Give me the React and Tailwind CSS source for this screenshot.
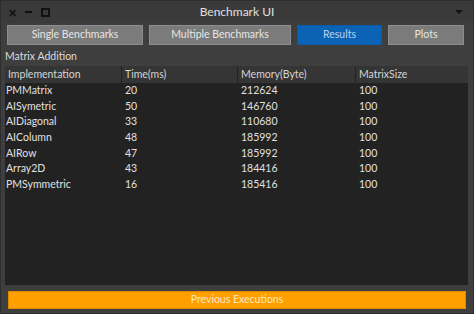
import React from "react";

const rows = [
  ["PMMatrix", "20", "212624", "100"],
  ["AISymetric", "50", "146760", "100"],
  ["AIDiagonal", "33", "110680", "100"],
  ["AIColumn", "48", "185992", "100"],
  ["AIRow", "47", "185992", "100"],
  ["Array2D", "43", "184416", "100"],
  ["PMSymmetric", "16", "185416", "100"],
];

const tabs = [
  { label: "Single Benchmarks", w: "w-[136px]" },
  { label: "Multiple Benchmarks", w: "w-[142px]" },
  { label: "Results", w: "w-[85px]", active: true },
  { label: "Plots", w: "w-[76px]" },
];

const App = () => {
  return (
    <div
      className="w-[474px] h-[314px] bg-[#3e3e3f] text-[10px] text-[#d8d8d8] flex flex-col overflow-hidden border border-[#2e2e2e]"
      style={{ fontFamily: 'Lato, "Noto Sans", sans-serif' }}
    >
      {/* title bar */}
      <div className="h-[22px] flex items-center px-[7px] relative bg-[#3a3a3b]">
        <div className="flex items-center gap-[6px] text-[#111]">
          <span className="font-bold text-[11px] leading-none">✕</span>
          <span className="w-[7px] h-[2px] bg-[#111] ml-[2px]" />
          <span className="w-[9px] h-[9px] border-2 border-[#111] ml-[3px]" />
        </div>
        <div className="absolute inset-0 flex items-center justify-center text-[12px] text-[#e0e0e0]">
          Benchmark UI
        </div>
        <div className="ml-auto mr-[3px] w-0 h-0 border-l-[4px] border-r-[4px] border-t-[4px] border-l-transparent border-r-transparent border-t-[#111]" />
      </div>

      {/* tabs */}
      <div className="flex gap-[6px] pl-[6px] mt-[2px]">
        {tabs.map((t) => (
          <div
            key={t.label}
            className={`${t.w} h-[20px] flex items-center justify-center text-[10.5px] ${
              t.active
                ? "bg-[#0b63b6] text-[#b9d4ee] border border-[#0a5aa6]"
                : "bg-[#7b7b7b] text-[#e6e6e6] border border-[#8d8d8d]"
            }`}
          >
            {t.label}
          </div>
        ))}
      </div>

      <div className="pl-[4px] mt-[3px] h-[18px] flex items-center text-[10.5px] text-[#dcdcdc]">
        Matrix Addition
      </div>

      {/* table */}
      <div className="mx-[4px] w-[463px] h-[219px] bg-[#222222] flex flex-col">
        <div className="grid grid-cols-[116px_116px_118px_1fr] h-[17px] bg-[#353535] text-[#d4d4d4] text-[10.5px]">
          {["Implementation", "Time(ms)", "Memory(Byte)", "MatrixSize"].map((h, i) => (
            <div
              key={h}
              className={`flex items-center pl-[3px] ${i > 0 ? "border-l border-[#222]" : ""}`}
            >
              {h}
            </div>
          ))}
        </div>
        {rows.map((r) => (
          <div key={r[0]} className="grid grid-cols-[116px_116px_118px_1fr] h-[15.7px] items-center text-[#e0e0e0] text-[10.5px]">
            {r.map((c, i) => (
              <div key={i} className={i === 0 ? "pl-[1px]" : "pl-[4px]"}>
                {c}
              </div>
            ))}
          </div>
        ))}
      </div>

      <div className="mx-[7px] mt-[6px] h-[18px] bg-[#ff9f00] border border-[#e08a00] flex items-center justify-center text-[#fde7c4] text-[10.5px]">
        Previous Executions
      </div>
    </div>
  );
};

export default App;
